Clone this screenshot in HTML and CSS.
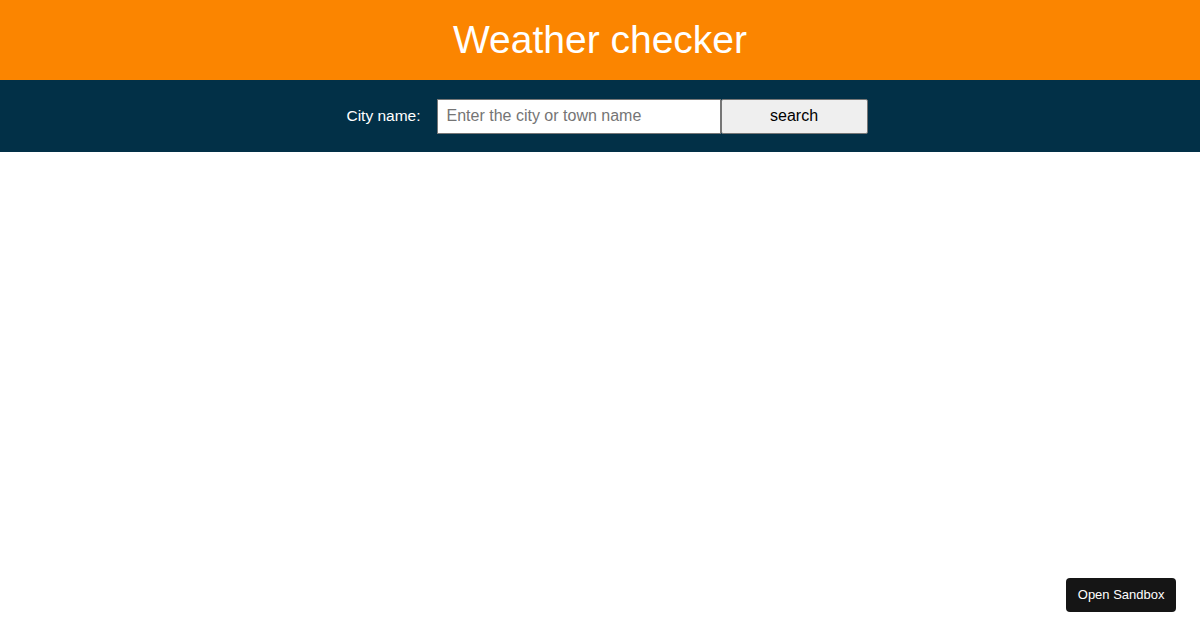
FILE: index.html
```html
<!DOCTYPE html>
<html>
<head>
    <title>Weather checker</title>
    <link rel="stylesheet" href="styles.css">
</head>
<body>
    <header class="top">
        <h1>Weather checker</h1>
    </header>
    <form class="search-bar" onsubmit="return false;">
        <label for="city">City name:</label>
        <input type="text" id="city" name="city" placeholder="Enter the city or town name">
        <button type="submit">search</button>
    </form>
    <div class="results"></div>
    <a href="#" class="sandbox-btn">Open Sandbox</a>
</body>
</html>
```

FILE: styles.css
```css
body {
    font-family: "Liberation Sans", Arial, sans-serif;
    margin: 0;
    padding: 0;
    background-color: #fff;
}

.top {
    background-color: #fb8500;
    height: 80px;
    display: flex;
    align-items: center;
    justify-content: center;
}

.top h1 {
    margin: 0;
    color: #fff;
    font-size: 39px;
    font-weight: normal;
}

.search-bar {
    background-color: #023047;
    height: 72px;
    display: flex;
    align-items: center;
    justify-content: center;
    padding-left: 14px;
    box-sizing: border-box;
}

.search-bar label {
    color: #fff;
    font-size: 15.5px;
    margin-right: 16px;
}

.search-bar input[type="text"] {
    width: 284px;
    height: 35px;
    box-sizing: border-box;
    padding: 0 9px;
    font-family: inherit;
    font-size: 16px;
    border: 1px solid #767676;
    margin: 0;
}

.search-bar input::placeholder {
    color: #757575;
}

.search-bar button {
    width: 147px;
    height: 35px;
    box-sizing: border-box;
    margin: 0;
    font-family: inherit;
    font-size: 16px;
    color: #000;
    background-color: #efefef;
    border: 1px solid #767676;
    border-radius: 2px;
}

/* floating link in the bottom right corner */
.sandbox-btn {
    position: fixed;
    right: 24px;
    bottom: 18px;
    background-color: #151515;
    color: #fff;
    font-size: 13px;
    text-decoration: none;
    padding: 9px 11.5px;
    border-radius: 4px;
    line-height: 16px;
}
```
